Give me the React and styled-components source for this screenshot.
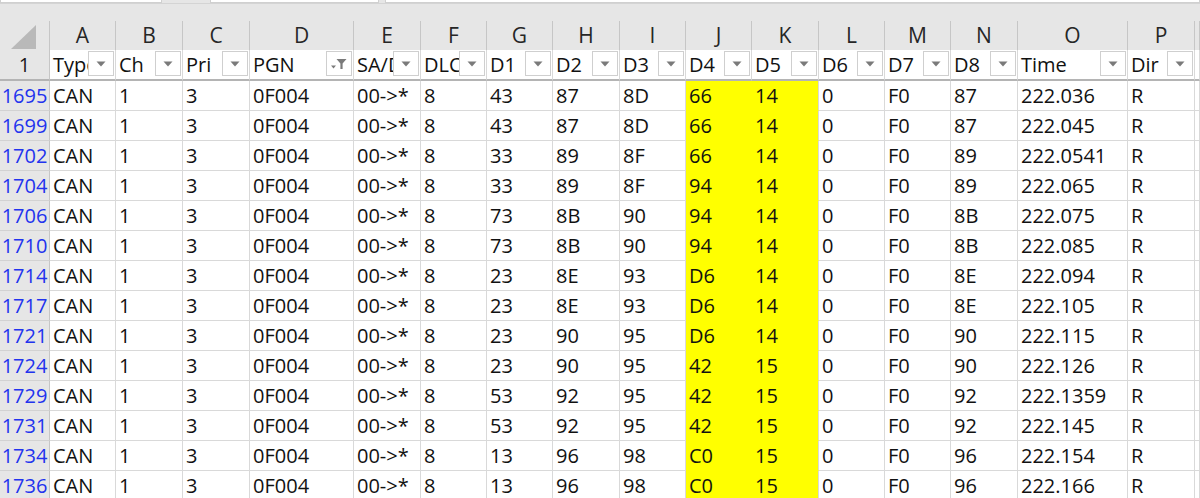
import React from 'react';
import styled, { createGlobalStyle } from 'styled-components';

const GlobalStyle = createGlobalStyle`
  html, body {
    margin: 0;
    padding: 0;
    background: #ffffff;
    overflow: hidden;
  }
  body {
    font-family: "Open Sans", "Liberation Sans", sans-serif;
  }
`;

const COLS = '50px 66px 67px 67px 104px 67px 66px 66px 67px 66px 66px 67px 66px 66px 67px 110px 67px 1fr';

const Sheet = styled.div`
  width: 1200px;
  height: 498px;
  overflow: hidden;
  background: #e6e6e6;
  color: #000;
`;

const TopStrip = styled.div`
  height: 4px;
  display: flex;
  gap: 6px;
  border-bottom: 1px solid #d4d4d4;
  box-sizing: border-box;
`;

const StripBox = styled.div`
  width: ${(p) => p.$w}px;
  margin-left: ${(p) => p.$ml || 0}px;
  background: #ffffff;
  border: 1px solid #d0d0d0;
  border-top: none;
`;

const Gap = styled.div`
  height: 17px;
`;

const Row = styled.div`
  display: grid;
  grid-template-columns: ${COLS};
  height: ${(p) => p.$h}px;
  box-sizing: border-box;
`;

const Corner = styled.div`
  border-right: 1px solid #c6c6c6;
  border-bottom: 1px solid #c6c6c6;
  display: flex;
  align-items: flex-end;
  justify-content: flex-end;
  padding: 0 13px 2px 0;
`;

const Letter = styled.div`
  background: #e6e6e6;
  border-right: 1px solid #c6c6c6;
  border-bottom: 1px solid #c6c6c6;
  display: flex;
  align-items: center;
  justify-content: center;
  font-size: 21px;
  color: #262626;
  padding-bottom: 2px;
`;

const RowHead = styled.div`
  background: #e6e6e6;
  border-right: 1px solid #c6c6c6;
  border-bottom: ${(p) => (p.$freeze ? '2px solid #b4b4b4' : '1px solid #d2d2d2')};
  display: flex;
  align-items: center;
  justify-content: center;
  font-size: 20px;
  color: ${(p) => (p.$filtered ? '#2233ee' : '#1a1a1a')};
`;

const Cell = styled.div`
  position: relative;
  overflow: hidden;
  white-space: nowrap;
  background: ${(p) => (p.$hl ? '#ffff00' : '#ffffff')};
  border-right: 1px solid ${(p) => (p.$hl && p.$hlRight ? '#ffff00' : '#d9d9d9')};
  border-bottom: ${(p) => (p.$freeze ? '2px solid #b4b4b4' : `1px solid ${p.$hl ? '#ffff00' : '#d9d9d9'}`)};
  display: flex;
  align-items: center;
  padding-left: 3px;
  font-size: 20px;
  color: #111;
`;

const FilterButton = styled.div`
  position: absolute;
  top: 1px;
  right: 1px;
  width: 26px;
  height: 25px;
  box-sizing: border-box;
  background: #ffffff;
  border: 1px solid #cfcfcf;
  display: flex;
  align-items: center;
  justify-content: center;
`;

const Arrow = () => (
  <svg width="10" height="6" viewBox="0 0 10 6">
    <path d="M0.5 0.5 L9.5 0.5 L5 5.5 Z" fill="#7a7a7a" />
  </svg>
);

const Funnel = () => (
  <svg width="18" height="14" viewBox="0 0 18 14">
    <path d="M1 8.5 L6 8.5 L3.5 11.5 Z" fill="#7a7a7a" />
    <path d="M6.5 2 L16.5 2 L12.6 6.5 L12.6 12 L10.4 12 L10.4 6.5 Z" fill="#7a7a7a" />
  </svg>
);

const letters = 'ABCDEFGHIJKLMNOP'.split('');
const fields = ['Type', 'Ch', 'Pri', 'PGN', 'SA/DA', 'DLC', 'D1', 'D2', 'D3', 'D4', 'D5', 'D6', 'D7', 'D8', 'Time', 'Dir'];

const rows = [
  ['1695', '43', '87', '8D', '66', '14', '87', '222.036'],
  ['1699', '43', '87', '8D', '66', '14', '87', '222.045'],
  ['1702', '33', '89', '8F', '66', '14', '89', '222.0541'],
  ['1704', '33', '89', '8F', '94', '14', '89', '222.065'],
  ['1706', '73', '8B', '90', '94', '14', '8B', '222.075'],
  ['1710', '73', '8B', '90', '94', '14', '8B', '222.085'],
  ['1714', '23', '8E', '93', 'D6', '14', '8E', '222.094'],
  ['1717', '23', '8E', '93', 'D6', '14', '8E', '222.105'],
  ['1721', '23', '90', '95', 'D6', '14', '90', '222.115'],
  ['1724', '23', '90', '95', '42', '15', '90', '222.126'],
  ['1729', '53', '92', '95', '42', '15', '92', '222.1359'],
  ['1731', '53', '92', '95', '42', '15', '92', '222.145'],
  ['1734', '13', '96', '98', 'C0', '15', '96', '222.154'],
  ['1736', '13', '96', '98', 'C0', '15', '96', '222.166'],
];

const App = () => {
  return (
    <>
      <GlobalStyle />
      <Sheet>
        <TopStrip>
          <StripBox $w={161} />
          <StripBox $w={169} $ml={42} />
          <StripBox $w={820} />
        </TopStrip>
        <Gap />

        <Row $h={29}>
          <Corner>
            <svg width="25" height="24" viewBox="0 0 25 24">
              <path d="M25 0 L25 24 L0 24 Z" fill="#b9b9b9" />
            </svg>
          </Corner>
          {letters.map((l) => (
            <Letter key={l}>{l}</Letter>
          ))}
          <Letter />
        </Row>

        <Row $h={31}>
          <RowHead $freeze>1</RowHead>
          {fields.map((f) => (
            <Cell key={f} $freeze>
              {f}
              <FilterButton>{f === 'PGN' ? <Funnel /> : <Arrow />}</FilterButton>
            </Cell>
          ))}
          <Cell $freeze />
        </Row>

        {rows.map(([n, d1, d2, d3, d4, d5, d8, time]) => (
          <Row key={n} $h={30}>
            <RowHead $filtered>{n}</RowHead>
            <Cell>CAN</Cell>
            <Cell>1</Cell>
            <Cell>3</Cell>
            <Cell>0F004</Cell>
            <Cell>00-&gt;*</Cell>
            <Cell>8</Cell>
            <Cell>{d1}</Cell>
            <Cell>{d2}</Cell>
            <Cell>{d3}</Cell>
            <Cell $hl $hlRight>{d4}</Cell>
            <Cell $hl>{d5}</Cell>
            <Cell>0</Cell>
            <Cell>F0</Cell>
            <Cell>{d8}</Cell>
            <Cell>{time}</Cell>
            <Cell>R</Cell>
            <Cell />
          </Row>
        ))}
      </Sheet>
    </>
  );
};

export default App;
